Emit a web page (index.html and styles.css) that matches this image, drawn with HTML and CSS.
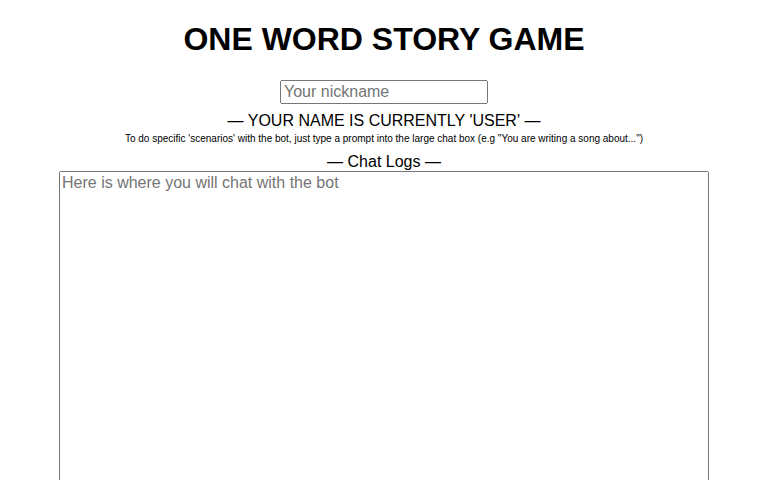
FILE: index.html
```
<!DOCTYPE html>
<html lang="en">
<head>
    <meta charset="UTF-8">
    <meta name="viewport" content="width=device-width, initial-scale=1.0">
    <title>One Word Story Game</title>
    <link rel="stylesheet" href="styles.css">
</head>
<body>
    <h1>ONE WORD STORY GAME</h1>

    <input type="text" class="nickname" id="nickname" placeholder="Your nickname" aria-label="Your nickname">
    <p class="current-name">— YOUR NAME IS CURRENTLY 'USER' —</p>
    <p class="hint">To do specific 'scenarios' with the bot, just type a prompt into the large chat box (e.g "You are writing a song about...")</p>

    <label class="chat-label" for="chat-logs">— Chat Logs —</label>
    <textarea class="chat-logs" id="chat-logs" placeholder="Here is where you will chat with the bot"></textarea>
</body>
</html>
```

FILE: styles.css
```
body {
    display: flex;
    flex-direction: column;
    align-items: center;
    margin: 0;
    font-family: "Liberation Sans", Arial, sans-serif;
    font-size: 16px;
    line-height: 18px;
    text-align: center;
}
h1 {
    margin: 21px 0 22px;
    font-size: 32px;
    line-height: 37px;
}
.nickname,
.chat-logs {
    box-sizing: border-box;
    font-family: inherit;
    font-size: 16px;
}
.nickname {
    width: 208px;
}
.current-name {
    margin: 8px 0 0;
}
.hint {
    margin: 0 0 5px;
    font-size: 10px;
}
.chat-logs {
    width: 650px;
    max-width: 90%;
    height: 400px;
    resize: none;
}
```
